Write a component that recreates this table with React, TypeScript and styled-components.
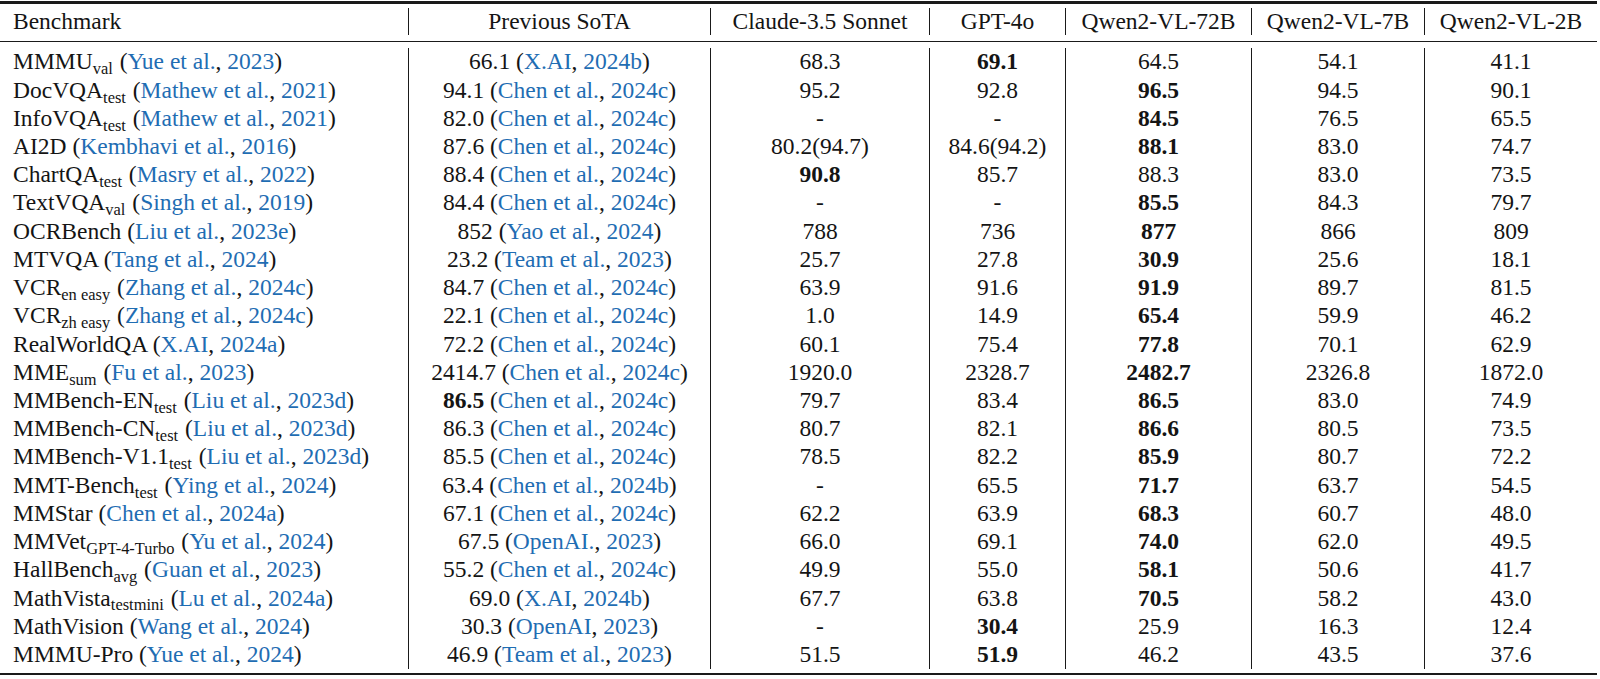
import React from "react";
import styled, { createGlobalStyle } from "styled-components";

const GlobalStyle = createGlobalStyle`
  html, body {
    margin: 0;
    padding: 0;
    background: #ffffff;
  }
  body {
    font-family: "Liberation Serif", "DejaVu Serif", serif;
    color: #141414;
  }
`;

const COLS = "408px 302px 219px 136px 186px 173px 173px";

const Table = styled.div`
  width: 1597px;
  padding-top: 1px;
  font-size: 23.5px;
`;

const Rule = styled.div<{ $thick?: boolean }>`
  height: ${(p) => (p.$thick ? "2.5px" : "1.5px")};
  background: #1a1a1a;
`;

const Head = styled.div`
  display: grid;
  grid-template-columns: ${COLS};
  height: 27px;
  margin: 4.5px 0 5.5px;
`;

const Body = styled.div`
  display: flex;
  flex-direction: column;
  margin: 6px 0 4px;
`;

const Row = styled.div`
  display: grid;
  grid-template-columns: ${COLS};
  height: 28.23px;
`;

const Cell = styled.div<{ $first?: boolean }>`
  display: flex;
  align-items: center;
  justify-content: ${(p) => (p.$first ? "flex-start" : "center")};
  padding-left: ${(p) => (p.$first ? "13px" : "0")};
  border-left: ${(p) => (p.$first ? "none" : "1px solid #1a1a1a")};
  white-space: nowrap;
  line-height: 1;
`;

const Content = styled.span`
  white-space: pre;
`;

const Sub = styled.span`
  font-size: 0.7em;
  position: relative;
  top: 0.3em;
  margin-right: 1px;
`;

const Cite = styled.span`
  color: #1f6db3;
`;

const Num = styled.span<{ $bold?: boolean }>`
  font-weight: ${(p) => (p.$bold ? 700 : 400)};
`;

type Ref = [string, string];

interface Item {
  name: string;
  sub?: string;
  ref: Ref;
  prev: string;
  prevBold?: boolean;
  prevRef: Ref;
  vals: string[];
  best: number;
}

const rows: Item[] = [
  { name: "MMMU", sub: "val", ref: ["Yue et al.", "2023"], prev: "66.1", prevRef: ["X.AI", "2024b"], vals: ["68.3", "69.1", "64.5", "54.1", "41.1"], best: 1 },
  { name: "DocVQA", sub: "test", ref: ["Mathew et al.", "2021"], prev: "94.1", prevRef: ["Chen et al.", "2024c"], vals: ["95.2", "92.8", "96.5", "94.5", "90.1"], best: 2 },
  { name: "InfoVQA", sub: "test", ref: ["Mathew et al.", "2021"], prev: "82.0", prevRef: ["Chen et al.", "2024c"], vals: ["-", "-", "84.5", "76.5", "65.5"], best: 2 },
  { name: "AI2D", ref: ["Kembhavi et al.", "2016"], prev: "87.6", prevRef: ["Chen et al.", "2024c"], vals: ["80.2(94.7)", "84.6(94.2)", "88.1", "83.0", "74.7"], best: 2 },
  { name: "ChartQA", sub: "test", ref: ["Masry et al.", "2022"], prev: "88.4", prevRef: ["Chen et al.", "2024c"], vals: ["90.8", "85.7", "88.3", "83.0", "73.5"], best: 0 },
  { name: "TextVQA", sub: "val", ref: ["Singh et al.", "2019"], prev: "84.4", prevRef: ["Chen et al.", "2024c"], vals: ["-", "-", "85.5", "84.3", "79.7"], best: 2 },
  { name: "OCRBench", ref: ["Liu et al.", "2023e"], prev: "852", prevRef: ["Yao et al.", "2024"], vals: ["788", "736", "877", "866", "809"], best: 2 },
  { name: "MTVQA", ref: ["Tang et al.", "2024"], prev: "23.2", prevRef: ["Team et al.", "2023"], vals: ["25.7", "27.8", "30.9", "25.6", "18.1"], best: 2 },
  { name: "VCR", sub: "en easy", ref: ["Zhang et al.", "2024c"], prev: "84.7", prevRef: ["Chen et al.", "2024c"], vals: ["63.9", "91.6", "91.9", "89.7", "81.5"], best: 2 },
  { name: "VCR", sub: "zh easy", ref: ["Zhang et al.", "2024c"], prev: "22.1", prevRef: ["Chen et al.", "2024c"], vals: ["1.0", "14.9", "65.4", "59.9", "46.2"], best: 2 },
  { name: "RealWorldQA", ref: ["X.AI", "2024a"], prev: "72.2", prevRef: ["Chen et al.", "2024c"], vals: ["60.1", "75.4", "77.8", "70.1", "62.9"], best: 2 },
  { name: "MME", sub: "sum", ref: ["Fu et al.", "2023"], prev: "2414.7", prevRef: ["Chen et al.", "2024c"], vals: ["1920.0", "2328.7", "2482.7", "2326.8", "1872.0"], best: 2 },
  { name: "MMBench-EN", sub: "test", ref: ["Liu et al.", "2023d"], prev: "86.5", prevBold: true, prevRef: ["Chen et al.", "2024c"], vals: ["79.7", "83.4", "86.5", "83.0", "74.9"], best: 2 },
  { name: "MMBench-CN", sub: "test", ref: ["Liu et al.", "2023d"], prev: "86.3", prevRef: ["Chen et al.", "2024c"], vals: ["80.7", "82.1", "86.6", "80.5", "73.5"], best: 2 },
  { name: "MMBench-V1.1", sub: "test", ref: ["Liu et al.", "2023d"], prev: "85.5", prevRef: ["Chen et al.", "2024c"], vals: ["78.5", "82.2", "85.9", "80.7", "72.2"], best: 2 },
  { name: "MMT-Bench", sub: "test", ref: ["Ying et al.", "2024"], prev: "63.4", prevRef: ["Chen et al.", "2024b"], vals: ["-", "65.5", "71.7", "63.7", "54.5"], best: 2 },
  { name: "MMStar", ref: ["Chen et al.", "2024a"], prev: "67.1", prevRef: ["Chen et al.", "2024c"], vals: ["62.2", "63.9", "68.3", "60.7", "48.0"], best: 2 },
  { name: "MMVet", sub: "GPT-4-Turbo", ref: ["Yu et al.", "2024"], prev: "67.5", prevRef: ["OpenAI.", "2023"], vals: ["66.0", "69.1", "74.0", "62.0", "49.5"], best: 2 },
  { name: "HallBench", sub: "avg", ref: ["Guan et al.", "2023"], prev: "55.2", prevRef: ["Chen et al.", "2024c"], vals: ["49.9", "55.0", "58.1", "50.6", "41.7"], best: 2 },
  { name: "MathVista", sub: "testmini", ref: ["Lu et al.", "2024a"], prev: "69.0", prevRef: ["X.AI", "2024b"], vals: ["67.7", "63.8", "70.5", "58.2", "43.0"], best: 2 },
  { name: "MathVision", ref: ["Wang et al.", "2024"], prev: "30.3", prevRef: ["OpenAI", "2023"], vals: ["-", "30.4", "25.9", "16.3", "12.4"], best: 1 },
  { name: "MMMU-Pro", ref: ["Yue et al.", "2024"], prev: "46.9", prevRef: ["Team et al.", "2023"], vals: ["51.5", "51.9", "46.2", "43.5", "37.6"], best: 1 },
];

const headers = [
  "Benchmark",
  "Previous SoTA",
  "Claude-3.5 Sonnet",
  "GPT-4o",
  "Qwen2-VL-72B",
  "Qwen2-VL-7B",
  "Qwen2-VL-2B",
];

function Citation({ r }: { r: Ref }) {
  return (
    <>
      {"("}
      <Cite>{r[0]}</Cite>
      {", "}
      <Cite>{r[1]}</Cite>
      {")"}
    </>
  );
}

export default function App() {
  return (
    <>
      <GlobalStyle />
      <Table>
        <Rule $thick />
        <Head>
          {headers.map((h, i) => (
            <Cell key={h} $first={i === 0}>
              <Content>{h}</Content>
            </Cell>
          ))}
        </Head>
        <Rule />
        <Body>
          {rows.map((r, idx) => (
            <Row key={idx}>
              <Cell $first>
                <Content>
                  {r.name}
                  {r.sub && <Sub>{r.sub}</Sub>}
                  {" "}
                  <Citation r={r.ref} />
                </Content>
              </Cell>
              <Cell>
                <Content>
                  <Num $bold={r.prevBold}>{r.prev}</Num>
                  {" "}
                  <Citation r={r.prevRef} />
                </Content>
              </Cell>
              {r.vals.map((v, i) => (
                <Cell key={i}>
                  <Num $bold={i === r.best}>{v}</Num>
                </Cell>
              ))}
            </Row>
          ))}
        </Body>
        <Rule $thick />
      </Table>
    </>
  );
}
